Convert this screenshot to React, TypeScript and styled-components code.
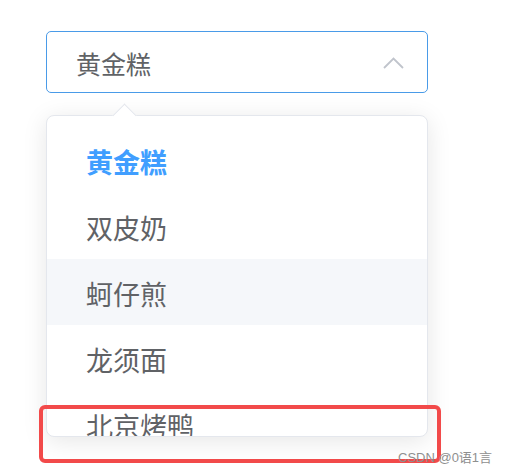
import React from 'react';
import styled, { createGlobalStyle } from 'styled-components';

const GlobalStyle = createGlobalStyle`
  html, body {
    margin: 0;
    padding: 0;
    background: #fff;
  }
  body {
    font-family: "Noto Sans CJK SC", "Noto Sans", sans-serif;
  }
`;

const Page = styled.div`
  position: relative;
  width: 508px;
  height: 472px;
  padding: 31px 0 0 46px;
  box-sizing: border-box;
  overflow: hidden;
`;

const Select = styled.div`
  width: 382px;
  display: flex;
  flex-direction: column;
`;

const SelectBox = styled.div`
  height: 62px;
  box-sizing: border-box;
  border: 1px solid #4a9be8;
  border-radius: 5px;
  display: flex;
  align-items: center;
  justify-content: space-between;
  padding: 1px 23px 0 29px;
  font-size: 25px;
  color: #606266;
`;

const Dropdown = styled.div`
  position: relative;
  margin-top: 22px;
  border: 1px solid #e4e7ed;
  border-radius: 8px;
  background: #fff;
  box-shadow: 0 4px 24px rgba(0, 0, 0, 0.1);
`;

const Arrow = styled.div`
  position: absolute;
  top: -9px;
  left: 69px;
  width: 16px;
  height: 16px;
  background: #fff;
  border-top: 1px solid #e4e7ed;
  border-left: 1px solid #e4e7ed;
  transform: rotate(45deg);
`;

const List = styled.ul`
  position: relative;
  list-style: none;
  margin: 0;
  padding: 11px 0 0;
  height: 309px;
  overflow: hidden;
  border-radius: 8px;
`;

const Item = styled.li<{ selected?: boolean; hover?: boolean }>`
  height: 66px;
  box-sizing: border-box;
  padding: 3px 39px 0;
  line-height: 63px;
  font-size: 27px;
  color: ${({ selected }) => (selected ? '#409eff' : '#606266')};
  font-weight: ${({ selected }) => (selected ? 700 : 400)};
  background: ${({ hover }) => (hover ? '#f5f7fa' : 'transparent')};
  white-space: nowrap;
`;

const Highlight = styled.div`
  position: absolute;
  left: 39px;
  top: 405px;
  width: 402px;
  height: 58px;
  box-sizing: border-box;
  border: 4px solid #f24a4a;
  border-radius: 6px;
`;

const Watermark = styled.div`
  position: absolute;
  left: 398px;
  top: 447px;
  font-family: "Liberation Sans", "Noto Sans CJK SC", sans-serif;
  font-size: 13px;
  color: #8f8f8f;
  white-space: nowrap;
`;

const options = ['黄金糕', '双皮奶', '蚵仔煎', '龙须面', '北京烤鸭'];

const App: React.FC = () => {
  return (
    <>
      <GlobalStyle />
      <Page>
        <Select>
          <SelectBox>
            <span>黄金糕</span>
            <svg width="21" height="12" viewBox="0 0 21 12">
              <polyline points="1,11 10.5,1.5 20,11" fill="none" stroke="#c0c4cc" strokeWidth="1.8" />
            </svg>
          </SelectBox>
          <Dropdown>
            <Arrow />
            <List>
              {options.map((o, i) => (
                <Item key={o} selected={i === 0} hover={i === 2}>{o}</Item>
              ))}
            </List>
          </Dropdown>
        </Select>
        <Highlight />
        <Watermark>CSDN @0语1言</Watermark>
      </Page>
    </>
  );
};

export default App;
